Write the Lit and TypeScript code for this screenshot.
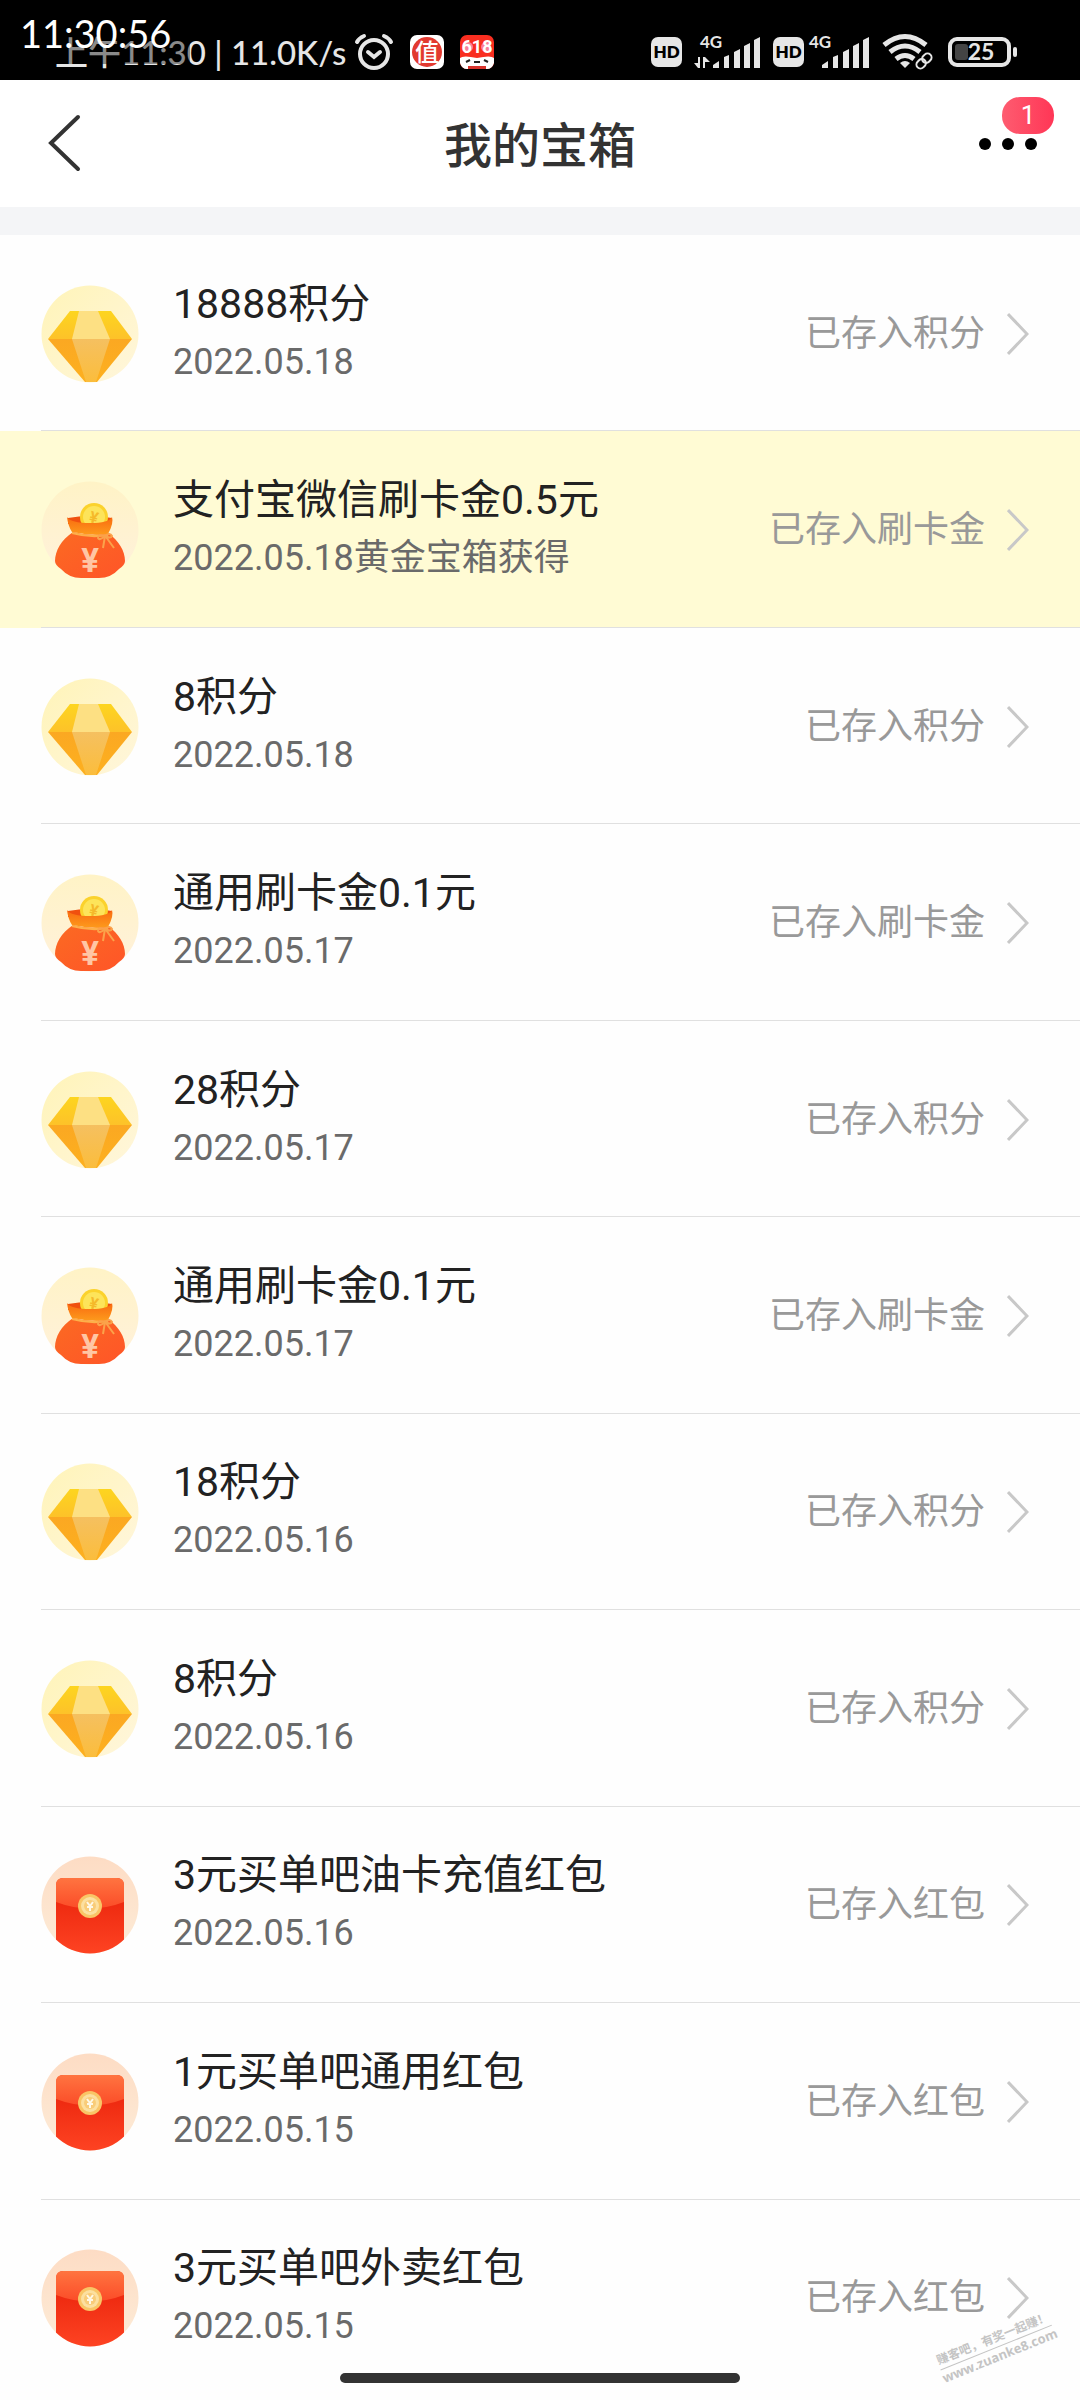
import { LitElement, html, css, svg } from "lit";
import { customElement, property } from "lit/decorators.js";
import { classMap } from "lit/directives/class-map.js";

type Kind = "points" | "cash" | "packet";

interface Prize {
  kind: Kind;
  title: string;
  note: string;
  highlight?: boolean;
}

const STORED: Record<Kind, string> = {
  points: "已存入积分",
  cash: "已存入刷卡金",
  packet: "已存入红包",
};

const PRIZES: Prize[] = [
  { kind: "points", title: "18888积分", note: "2022.05.18" },
  { kind: "cash", title: "支付宝微信刷卡金0.5元", note: "2022.05.18黄金宝箱获得", highlight: true },
  { kind: "points", title: "8积分", note: "2022.05.18" },
  { kind: "cash", title: "通用刷卡金0.1元", note: "2022.05.17" },
  { kind: "points", title: "28积分", note: "2022.05.17" },
  { kind: "cash", title: "通用刷卡金0.1元", note: "2022.05.17" },
  { kind: "points", title: "18积分", note: "2022.05.16" },
  { kind: "points", title: "8积分", note: "2022.05.16" },
  { kind: "packet", title: "3元买单吧油卡充值红包", note: "2022.05.16" },
  { kind: "packet", title: "1元买单吧通用红包", note: "2022.05.15" },
  { kind: "packet", title: "3元买单吧外卖红包", note: "2022.05.15" },
];

@customElement("prize-icon")
export class PrizeIcon extends LitElement {
  @property() kind: Kind = "points";

  static styles = css`
    :host { display: block; flex: none; }
    .icon { display: block; width: 98px; height: 98px; }
    .yen { font-family: Roboto, "Liberation Sans", sans-serif; font-weight: 700; }
  `;

  private gem() {
    return svg`
      <defs>
        <linearGradient id="disc" x1="0" y1="0" x2="1" y2="1"><stop offset="0" stop-color="#fff4b8"/><stop offset="1" stop-color="#fff6dc"/></linearGradient>
        <linearGradient id="top" x1="0" y1="0" x2="0" y2="1"><stop offset="0" stop-color="#fdd51f"/><stop offset="1" stop-color="#fdc229"/></linearGradient>
        <linearGradient id="low" x1="0" y1="0" x2="0" y2="1"><stop offset="0" stop-color="#fba822"/><stop offset="1" stop-color="#fdb01f"/></linearGradient>
        <linearGradient id="mid" x1="0" y1="0" x2="0" y2="1"><stop offset="0" stop-color="#f5c060"/><stop offset="1" stop-color="#fbbd3c"/></linearGradient>
      </defs>
      <circle cx="49" cy="49" r="48.5" fill="url(#disc)"/>
      <path d="M29 26H70L91 54H7Z" fill="url(#top)"/>
      <path d="M38 26H57L69 54H31Z" fill="#fde083"/>
      <path d="M7 54H91L56 97H44Z" fill="url(#low)"/>
      <path d="M31 54H69L55 97H45Z" fill="url(#mid)"/>`;
  }

  private bag() {
    return svg`
      <defs>
        <linearGradient id="disc" x1="0" y1="0" x2="0" y2="1"><stop offset="0" stop-color="#fff3c6"/><stop offset="1" stop-color="#fff1dc"/></linearGradient>
        <linearGradient id="neck" x1="0" y1="0" x2="0" y2="1"><stop offset="0" stop-color="#f96a10"/><stop offset="1" stop-color="#fd9a1c"/></linearGradient>
        <linearGradient id="sack" x1="0" y1="0" x2="1" y2="1"><stop offset="0" stop-color="#fb6a22"/><stop offset="1" stop-color="#ff5528"/></linearGradient>
      </defs>
      <circle cx="49" cy="49" r="48.5" fill="url(#disc)"/>
      <path d="M27 37Q49 33 71 37V43H27Z" fill="#f0500f"/>
      <circle cx="53" cy="36" r="14" fill="#fbd22c"/>
      <circle cx="53" cy="36" r="11" fill="#fde45a"/>
      <text class="yen" x="53" y="42" font-size="16" text-anchor="middle" fill="#f5b92a" transform="rotate(15 53 36)">¥</text>
      <path d="M32 51Q50 56 67 52C78 60 84 70 84 80Q84 84 78 88Q70 97 58 97H40Q28 97 20 88Q14 84 14 80C14 70 20 59 32 51Z" fill="url(#sack)"/>
      <path d="M26 36Q30 42 49 42Q68 42 71 36Q73 42 67 53Q50 55 31 51Q27 45 26 36Z" fill="url(#neck)"/>
      <path d="M31 52Q49 57 67 54" fill="none" stroke="#fdb04a" stroke-width="2"/>
      <path d="M64 55Q57 53 57 57Q58 60 64 55Q69 51 71 55Q70 58 64 55L62 67M65 56L73 67" fill="none" stroke="#fba24a" stroke-width="2"/>
      <text class="yen" x="49" y="91" font-size="33" text-anchor="middle" fill="#ffc6a4">¥</text>`;
  }

  private envelope() {
    return svg`
      <defs>
        <linearGradient id="disc" x1="0" y1="0" x2="0" y2="1"><stop offset="0" stop-color="#fddcc4"/><stop offset="1" stop-color="#fdecd8"/></linearGradient>
        <linearGradient id="flap" x1="0" y1="0" x2="0" y2="1"><stop offset="0" stop-color="#ff7440"/><stop offset="1" stop-color="#fb4c28"/></linearGradient>
        <linearGradient id="body" x1="0" y1="0" x2="0" y2="1"><stop offset="0.3" stop-color="#ee2a10"/><stop offset="1" stop-color="#ff4524"/></linearGradient>
        <clipPath id="round"><circle cx="49" cy="49" r="48.5"/></clipPath>
      </defs>
      <circle cx="49" cy="49" r="48.5" fill="url(#disc)"/>
      <g clip-path="url(#round)">
        <rect x="15" y="22" width="68" height="80" rx="7" fill="url(#body)"/>
        <path d="M15 46V29Q15 22 22 22H76Q83 22 83 29V46Q49 59 15 46Z" fill="url(#flap)"/>
      </g>
      <circle cx="49" cy="50" r="12" fill="#f9c566"/>
      <circle cx="49" cy="50" r="9" fill="#fce0a0"/>
      <circle cx="49" cy="50" r="6" fill="#f9cc78"/>
      <path d="M46 46L49 50L52 46M49 50V55M46 51H52" stroke="#fff8e6" stroke-width="2" fill="none"/>`;
  }

  render() {
    const art =
      this.kind === "points" ? this.gem() : this.kind === "cash" ? this.bag() : this.envelope();
    return html`<svg class="icon" viewBox="0 0 98 98" aria-hidden="true">${art}</svg>`;
  }
}

@customElement("status-bar")
export class StatusBar extends LitElement {
  static styles = css`
    :host {
      display: flex;
      position: relative;
      align-items: center;
      justify-content: space-between;
      height: 80px;
      box-sizing: border-box;
      padding: 24px 63px 0 55px;
      background: #000;
      color: #e6e6e6;
      font-family: Lato, "Noto Sans CJK SC", sans-serif;
    }
    .side, .signal { display: flex; align-items: center; }
    .side { gap: 12px; }
    .signal { gap: 6px; }
    .side.left { gap: 16px; }
    .text { font-size: 33px; line-height: 48px; font-weight: 500; white-space: pre; }
    .alarm { margin-left: -8px; }
    .wifi { margin-right: 4px; }
    svg { display: block; flex: none; overflow: visible; }
    .overlay {
      position: absolute;
      left: 0;
      top: 0;
      width: 190px;
      height: 64px;
      box-sizing: border-box;
      padding: 10px 0 0 20px;
      background: rgba(0, 0, 0, 0.4);
      color: #fff;
      font-size: 38px;
      line-height: 46px;
      white-space: nowrap;
    }
    .hd { font: 800 17px Lato, sans-serif; }
    .gen { font: 700 17px Lato, sans-serif; }
    .level { font: 700 23px Lato, sans-serif; }
    .cn { font: 500 24px "Noto Sans CJK SC", sans-serif; }
    .sale { font: 700 18px Roboto, sans-serif; }
  `;

  private hd() {
    return html`<svg width="31" height="30" viewBox="0 0 31 30" aria-hidden="true">
      <rect width="31" height="30" rx="7" fill="#e6e6e6"/>
      <text class="hd" x="15.5" y="21" text-anchor="middle" fill="#000">HD</text>
    </svg>`;
  }

  private bars(arrows: boolean) {
    const left = arrows ? 0 : 7;
    return html`<svg width=${67 - left} height="34" viewBox="${left} 0 ${67 - left} 34" aria-hidden="true">
      <text class="gen" x="6" y="13" fill="#e6e6e6">4G</text>
      ${arrows ? svg`<path d="M0 28H4V22H6V33H4ZM9 22H11L16 27H11V33H9Z" fill="#e6e6e6"/>` : null}
      <path d="M19 33V30L25 26V33ZM30 33V22L35 20V33ZM40 33V17L46 14V33ZM50 33V11L56 8V33ZM60 33V5L66 2V33Z" fill="#e6e6e6"/>
    </svg>`;
  }

  render() {
    return html`
      <div class="side left">
        <span class="text">上午11:30 | 11.0K/s</span>
        <svg class="alarm" width="40" height="40" viewBox="0 0 40 40" fill="none" stroke="#e6e6e6" stroke-width="4" stroke-linecap="round" aria-hidden="true">
          <circle cx="20" cy="22" r="14"/>
          <path d="M14 20L20 25L26 20"/>
          <path d="M3 10Q5 6 10 4M37 10Q35 6 30 4"/>
        </svg>
        <svg width="34" height="34" viewBox="0 0 34 34" aria-hidden="true">
          <rect width="34" height="34" rx="7" fill="#fff"/>
          <circle cx="17" cy="17" r="15" fill="#e23a30"/>
          <text class="cn" x="17" y="26" text-anchor="middle" fill="#fff">值</text>
        </svg>
        <svg width="34" height="34" viewBox="0 0 34 34" aria-hidden="true">
          <rect width="34" height="34" rx="7" fill="#f92e20"/>
          <path d="M0 23Q3 20 17 23Q31 20 34 23V28Q32 34 27 34H7Q2 34 0 28Z" fill="#fff"/>
          <circle cx="8" cy="12" r="5" fill="#fb7f9a"/><circle cx="26" cy="12" r="5" fill="#fb7f9a"/>
          <text class="sale" x="17" y="18" text-anchor="middle" fill="#fff">618</text>
          <path d="M6 27L10 25M28 27L24 25M14 27H20" stroke="#222" stroke-width="2"/>
          <path d="M8 31H26V34H8Z" fill="#d8332c"/>
        </svg>
      </div>
      <div class="side">
        ${this.hd()} ${this.bars(true)}
        <span class="signal">${this.hd()} ${this.bars(false)}</span>
        <svg class="wifi" width="50" height="36" viewBox="0 0 50 36" fill="none" stroke="#e6e6e6" aria-hidden="true">
          <path d="M2 11Q23 -6 44 11M8 18Q23 6 38 18M14 25Q23 18 32 25" stroke-width="5"/>
          <path d="M18 29Q23 25 28 29L23 34Z" fill="#e6e6e6" stroke="none"/>
          <g transform="rotate(-45 42 27)">
            <path d="M33 27H51" stroke="#000" stroke-width="14" stroke-linecap="round"/>
            <rect x="33" y="23" width="10" height="8" rx="4" stroke-width="2"/>
            <rect x="41" y="23" width="10" height="8" rx="4" stroke-width="2"/>
          </g>
        </svg>
        <svg width="69" height="30" viewBox="0 0 69 30" aria-hidden="true">
          <rect x="2" y="2" width="59" height="26" rx="7" fill="none" stroke="#e6e6e6" stroke-width="4"/>
          <rect x="7" y="7" width="13" height="16" rx="3" fill="#444"/>
          <text class="level" x="33" y="23" text-anchor="middle" fill="#e6e6e6">25</text>
          <rect x="65" y="10" width="4" height="10" rx="2" fill="#e6e6e6"/>
        </svg>
      </div>
      <div class="overlay">11:30:56</div>
    `;
  }
}

@customElement("app-root")
export class AppRoot extends LitElement {
  static styles = css`
    :host {
      display: flex;
      flex-direction: column;
      position: relative;
      min-height: 100vh;
      box-sizing: border-box;
      padding-bottom: 4px;
      background: #fefefe;
      color: #222;
      font-family: Roboto, "Noto Sans CJK SC", sans-serif;
    }
    .nav {
      display: grid;
      grid-template-columns: 1fr auto 1fr;
      align-items: center;
      height: 127px;
      padding: 0 42px;
      background: #fff;
    }
    .title {
      margin: 0;
      padding-top: 6px;
      font-size: 48px;
      line-height: 64px;
      font-weight: 500;
      color: #333;
    }
    .button {
      display: block;
      position: relative;
      padding: 0;
      border: 0;
      background: none;
      font: inherit;
    }
    .more { justify-self: end; }
    .button svg { display: block; }
    .badge {
      position: absolute;
      right: -16px;
      top: -17px;
      width: 52px;
      border-radius: 18px;
      background: linear-gradient(90deg, #fe5c70, #ff3656);
      color: #fff;
      font-size: 26px;
      line-height: 37px;
      text-align: center;
    }
    .list {
      flex: 1;
      display: grid;
      grid-auto-rows: 1fr;
      margin: 0;
      padding: 0;
      border-top: 28px solid #f4f5f7;
      list-style: none;
    }
    .item { display: flex; padding-left: 41px; }
    .item.highlight { background: #fffbd4; }
    .row {
      flex: 1;
      display: flex;
      align-items: center;
      padding: 10px 51px 8px 0;
      border-bottom: 1px solid #e0e0e0;
      color: inherit;
      text-decoration: none;
    }
    .item:last-child .row { border-bottom-color: transparent; }
    .body { flex: 1; margin-left: 34px; padding-bottom: 4px; }
    .name { font-size: 41px; line-height: 60px; }
    .note { font-size: 36px; line-height: 56px; color: #6a6a6a; }
    .state { font-size: 36px; line-height: 48px; color: #999; }
    .arrow { display: block; margin-left: 22px; }
    .home {
      position: absolute;
      left: 0;
      right: 0;
      bottom: 17px;
      width: 37%;
      height: 10px;
      margin: 0 auto;
      border-radius: 5px;
      background: #333;
    }
    .watermark {
      position: absolute;
      right: 22px;
      bottom: 35px;
      display: flex;
      flex-direction: column;
      align-items: center;
      transform: rotate(-22deg);
      color: #c4c4c4;
      font-family: "Open Sans", "Noto Sans CJK SC", sans-serif;
      font-weight: 700;
      white-space: nowrap;
    }
    .slogan { font-size: 12px; line-height: 18px; border-bottom: 1px solid #c4c4c4; }
    .site { font-size: 13px; line-height: 17px; }
  `;

  render() {
    return html`
      <status-bar></status-bar>
      <header class="nav">
        <button class="button" type="button" aria-label="返回">
          <svg width="44" height="62" viewBox="0 0 44 62" fill="none" stroke="#333" stroke-width="4" stroke-linecap="round">
            <path d="M36 4L9 30L36 56"/>
          </svg>
        </button>
        <h1 class="title">我的宝箱</h1>
        <button class="button more" type="button" aria-label="更多">
          <svg width="60" height="60" viewBox="0 0 60 60">
            <circle cx="7" cy="30" r="6"/><circle cx="30" cy="30" r="6"/><circle cx="53" cy="30" r="6"/>
          </svg>
          <span class="badge">1</span>
        </button>
      </header>
      <ul class="list">
        ${PRIZES.map(
          (p) => html`<li class=${classMap({ item: true, highlight: !!p.highlight })}>
            <a class="row" href="#">
              <prize-icon .kind=${p.kind}></prize-icon>
              <div class="body">
                <div class="name">${p.title}</div>
                <div class="note">${p.note}</div>
              </div>
              <span class="state">${STORED[p.kind]}</span>
              <svg class="arrow" width="22" height="44" viewBox="0 0 22 44" fill="none" stroke="#c8c8c8" stroke-width="3" aria-hidden="true">
                <path d="M1 2L20 22L1 42"/>
              </svg>
            </a>
          </li>`
        )}
      </ul>
      <div class="watermark">
        <span class="slogan">赚客吧，有奖一起赚！</span>
        <span class="site">www.zuanke8.com</span>
      </div>
      <div class="home"></div>
    `;
  }
}
